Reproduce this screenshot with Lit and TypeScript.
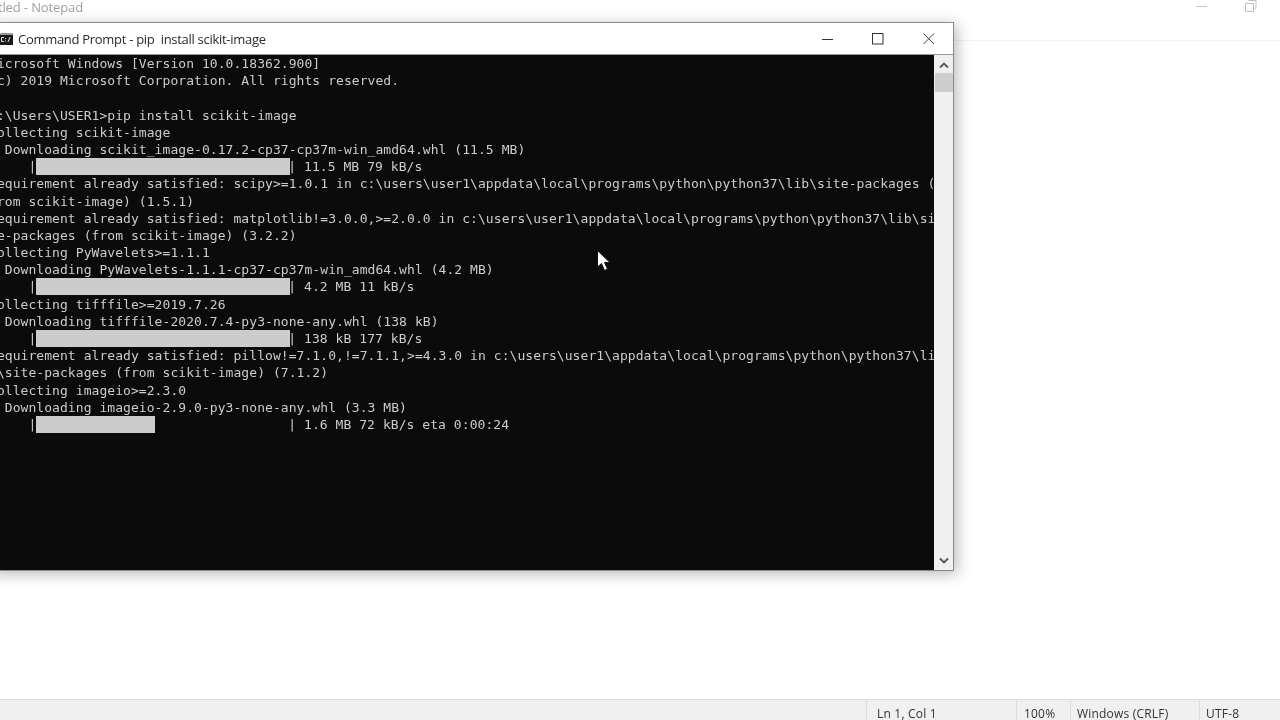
import { LitElement, html, css } from "lit";
import { customElement } from "lit/decorators.js";

type Line = string | { fill: number; empty?: number; tail: string };

const LINES: Line[] = [
  "Microsoft Windows [Version 10.0.18362.900]",
  "(c) 2019 Microsoft Corporation. All rights reserved.",
  "",
  "C:\\Users\\USER1>pip install scikit-image",
  "Collecting scikit-image",
  "  Downloading scikit_image-0.17.2-cp37-cp37m-win_amd64.whl (11.5 MB)",
  { fill: 32, tail: "| 11.5 MB 79 kB/s" },
  "Requirement already satisfied: scipy>=1.0.1 in c:\\users\\user1\\appdata\\local\\programs\\python\\python37\\lib\\site-packages (",
  "from scikit-image) (1.5.1)",
  "Requirement already satisfied: matplotlib!=3.0.0,>=2.0.0 in c:\\users\\user1\\appdata\\local\\programs\\python\\python37\\lib\\si",
  "te-packages (from scikit-image) (3.2.2)",
  "Collecting PyWavelets>=1.1.1",
  "  Downloading PyWavelets-1.1.1-cp37-cp37m-win_amd64.whl (4.2 MB)",
  { fill: 32, tail: "| 4.2 MB 11 kB/s" },
  "Collecting tifffile>=2019.7.26",
  "  Downloading tifffile-2020.7.4-py3-none-any.whl (138 kB)",
  { fill: 32, tail: "| 138 kB 177 kB/s" },
  "Requirement already satisfied: pillow!=7.1.0,!=7.1.1,>=4.3.0 in c:\\users\\user1\\appdata\\local\\programs\\python\\python37\\li",
  "b\\site-packages (from scikit-image) (7.1.2)",
  "Collecting imageio>=2.3.0",
  "  Downloading imageio-2.9.0-py3-none-any.whl (3.3 MB)",
  { fill: 15, empty: 17, tail: "| 1.6 MB 72 kB/s eta 0:00:24" },
];

@customElement("app-root")
export class AppRoot extends LitElement {
  static styles = css`
    :host {
      display: block;
      position: relative;
      width: 1280px;
      height: 720px;
      overflow: hidden;
      background: #fff;
      font-family: "Open Sans", "Noto Sans", sans-serif;
    }
    .notepad {
      display: flex;
      flex-direction: column;
      height: 720px;
      filter: blur(0.3px);
    }
    .np-title {
      height: 40px;
      flex: none;
      display: flex;
      justify-content: space-between;
      border-bottom: 1px solid #f2f2f2;
    }
    .np-name {
      margin-left: -27px;
      font-size: 13px;
      letter-spacing: -0.12px;
      line-height: 15px;
      color: #a0a0a0;
    }
    .np-btns {
      display: flex;
      gap: 36px;
      padding: 0 22px 0 0;
      align-items: flex-start;
    }
    .np-body {
      flex: 1;
    }
    .status {
      flex: none;
      height: 20px;
      background: #f0f0f0;
      border-top: 1px solid #dcdcdc;
      display: flex;
      justify-content: flex-end;
      font-size: 12px;
      letter-spacing: 0.2px;
      line-height: 27px;
      color: #333;
      overflow: hidden;
    }
    .cell {
      border-left: 1px solid #dcdcdc;
      box-sizing: border-box;
      white-space: nowrap;
    }
    .c1 { width: 150px; padding-left: 10px; }
    .c2 { width: 54px; padding-left: 7px; }
    .c3 { width: 129px; padding-left: 6px; }
    .c4 { width: 81px; padding-left: 6px; }

    .window {
      position: absolute;
      left: -12px;
      top: 22px;
      width: 966px;
      height: 549px;
      box-sizing: border-box;
      border: 1px solid #8a8a8a;
      background: #fff;
      box-shadow: 3px 3px 14px rgba(0, 0, 0, 0.28);
      display: flex;
      flex-direction: column;
      filter: blur(0.3px);
    }
    .titlebar {
      flex: none;
      height: 31px;
      display: flex;
      align-items: center;
      background: #fff;
      border-bottom: 1px solid #9a9a9a;
      padding-left: 10px;
    }
    .titlebar svg { flex: none; }
    .tb-text {
      margin-left: 5px;
      font-size: 13px;
      letter-spacing: -0.29px;
      color: #2a2a2a;
      white-space: pre;
      flex: 1;
    }
    .ctrls {
      display: flex;
      align-items: center;
      padding-right: 17px;
    }
    .ctrl-min { margin-right: 38px; }
    .ctrl-max { margin-right: 38px; }
    .main {
      flex: 1;
      min-height: 0;
      display: flex;
    }
    .console {
      flex: 1;
      min-width: 0;
      background: #0b0b0b;
      color: #cccccc;
      font-family: "DejaVu Sans Mono", "Liberation Mono", monospace;
      font-size: 13px;
      letter-spacing: 0.06px;
      line-height: 17.2px;
      overflow: hidden;
      white-space: pre;
    }
    .row { height: 17.2px; }
    .fill {
      display: inline-block;
      background: #cccccc;
      height: 17px;
      vertical-align: top;
      margin-right: -1.5px;
    }
    .pipe {
      display: inline-block;
      vertical-align: top;
    }
    .scroll {
      flex: none;
      width: 19px;
      background: #f0f0f0;
      display: flex;
      flex-direction: column;
      justify-content: space-between;
      position: relative;
    }
    .arrow {
      height: 20px;
      display: flex;
      align-items: center;
      justify-content: center;
    }
    .thumb {
      position: absolute;
      left: 1px;
      right: 0;
      top: 18px;
      height: 19px;
      background: #cdcdcd;
    }
    .cursor {
      position: absolute;
      left: 596px;
      top: 249px;
    }
  `;

  private renderLine(l: Line) {
    if (typeof l === "string") return html`<div class="row">${l}</div>`;
    const cw = 7.92;
    return html`<div class="row">     |<span class="fill" style="width:${l.fill * cw}px"></span>${l.empty
      ? html`<span class="pipe" style="width:${l.empty * cw}px"></span>`
      : ""}${l.tail}</div>`;
  }

  render() {
    return html`
      <div class="notepad">
        <div class="np-title">
          <div class="np-name">Untitled - Notepad</div>
          <div class="np-btns">
            <svg width="14" height="12" viewBox="0 0 14 12"><path d="M1 6.5h11" stroke="#c4c4c4" fill="none"/></svg>
            <svg width="12" height="12" viewBox="0 0 12 12" style="margin-right:1px"><path d="M3.5 .5h7.5v7.5h-2M.5 3.500h8v8h-8z" stroke="#c0c0c0" fill="none"/></svg>
          </div>
        </div>
        <div class="np-body"></div>
        <div class="status">
          <div class="cell c1">Ln 1, Col 1</div>
          <div class="cell c2">100%</div>
          <div class="cell c3">Windows (CRLF)</div>
          <div class="cell c4">UTF-8</div>
        </div>
      </div>

      <div class="window">
        <div class="titlebar">
          <svg width="14" height="12" viewBox="0 0 14 12">
            <rect width="14" height="12" fill="#1a1a1a"/>
            <rect width="14" height="2" fill="#9a9a9a"/>
            <path d="M5 4.500H2.500v4H5M6.500 5v1M6.500 7.500v1M11 4l-2 5" stroke="#e0e0e0" fill="none"/>
          </svg>
          <div class="tb-text">Command Prompt - pip  install scikit-image</div>
          <div class="ctrls">
            <svg class="ctrl-min" width="12" height="12" viewBox="0 0 12 12"><path d="M0 6.500h11" stroke="#333" fill="none"/></svg>
            <svg class="ctrl-max" width="12" height="12" viewBox="0 0 12 12"><rect x=".5" y=".5" width="10.500" height="10.500" stroke="#333" fill="none"/></svg>
            <svg width="14" height="14" viewBox="0 0 14 14"><path d="M1.500 1.500l10.500 10.500M12 1.500l-10.500 10.500" stroke="#444" fill="none"/></svg>
          </div>
        </div>
        <div class="main">
          <div class="console">${LINES.map((l) => this.renderLine(l))}</div>
          <div class="scroll">
            <div class="arrow"><svg width="10" height="7" viewBox="0 0 10 7"><path d="M1 5.500L5 1.500L9 5.500" stroke="#555" stroke-width="1.800" fill="none"/></svg></div>
            <div class="thumb"></div>
            <div class="arrow"><svg width="10" height="7" viewBox="0 0 10 7"><path d="M1 1.500L5 5.500L9 1.500" stroke="#555" stroke-width="1.800" fill="none"/></svg></div>
          </div>
        </div>
      </div>

      <svg class="cursor" width="16" height="24" viewBox="0 0 16 24">
        <path d="M1.500 1.500V18L5.500 14.500L8.500 21.500L11.500 20L8.500 13.500H14z" fill="#fff" stroke="#111" stroke-width="1"/>
      </svg>
    `;
  }
}
